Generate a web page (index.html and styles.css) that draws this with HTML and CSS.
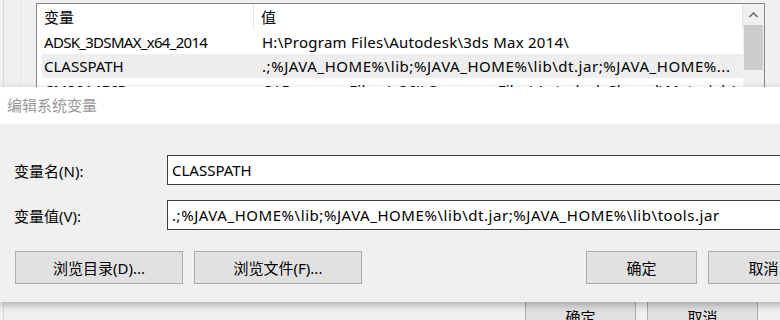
FILE: index.html
```html
<!DOCTYPE html>
<html lang="zh-CN">
<head>
<meta charset="utf-8">
<title>编辑系统变量</title>
<link rel="stylesheet" href="styles.css">
</head>
<body>
<div class="bgwin">
  <div class="tabpage">
    <div class="group">
      <div class="listview">
        <div class="lv-main">
          <div class="lv-header">
            <div class="col1 hcol">变量</div>
            <div class="col2 hcol">值</div>
          </div>
          <div class="lv-row">
            <div class="col1 sp-narrow">ADSK_3DSMAX_x64_2014</div>
            <div class="col2 sp-mid">H:\Program Files\Autodesk\3ds Max 2014\</div>
          </div>
          <div class="lv-row selected">
            <div class="col1">CLASSPATH</div>
            <div class="col2 sp-wide">.;%JAVA_HOME%\lib;%JAVA_HOME%\lib\dt.jar;%JAVA_HOME%...</div>
          </div>
          <div class="lv-row">
            <div class="col1">CM2014DIR</div>
            <div class="col2 sp-mid">C:\Program Files (x86)\Common Files\Autodesk Shared\Materials\</div>
          </div>
        </div>
        <div class="vscroll">
          <div class="sb-arrow">
            <svg width="9" height="6" viewBox="0 0 9 6"><path d="M0.5 5 L4.5 1 L8.5 5" fill="none" stroke="#606060" stroke-width="1.4"/></svg>
          </div>
          <div class="sb-thumb"></div>
        </div>
      </div>
    </div>
    <div class="bg-buttons">
      <button class="btn bg-btn">确定</button>
      <button class="btn bg-btn">取消</button>
    </div>
  </div>
</div>

<div class="dialog">
  <div class="titlebar">编辑系统变量</div>
  <div class="dlg-body">
    <div class="field">
      <label class="flabel">变量名(N):</label>
      <div class="input">CLASSPATH</div>
    </div>
    <div class="field">
      <label class="flabel">变量值(V):</label>
      <div class="input sp-wide">.;%JAVA_HOME%\lib;%JAVA_HOME%\lib\dt.jar;%JAVA_HOME%\lib\tools.jar</div>
    </div>
    <div class="buttons">
      <button class="btn wide">浏览目录(D)...</button>
      <button class="btn wide">浏览文件(F)...</button>
      <button class="btn ok">确定</button>
      <button class="btn">取消</button>
    </div>
  </div>
</div>
</body>
</html>
```

FILE: styles.css
```css
* { box-sizing: border-box; }

html, body {
  margin: 0;
  padding: 0;
  width: 780px;
  height: 320px;
  overflow: hidden;
}

body {
  background: #f0f0f0;
  font-family: "Noto Sans", "Noto Sans CJK SC", sans-serif;
  font-size: 15px;
  color: #000;
  position: relative;
}

.sp-narrow { letter-spacing: -0.7px; }
.sp-mid { letter-spacing: 0.25px; }
.sp-wide { letter-spacing: 0.55px; }

/* background window */
.bgwin {
  height: 320px;
  padding-left: 3px;
}

.tabpage {
  height: 320px;
  border-left: 1px solid #d9d9d9;
  display: flex;
  flex-direction: column;
}

.group {
  margin-left: 16px;
  border-left: 1px solid #e3e3e3;
  height: 296px;
  padding-top: 3px;
  padding-left: 15px;
}

.listview {
  width: 729px;
  height: 290px;
  border: 1px solid #828790;
  background: #fff;
  display: flex;
}

.lv-main {
  flex: 1;
  min-width: 0;
  overflow: hidden;
}

.lv-header {
  display: flex;
  height: 26px;
  align-items: center;
  border-right: 1px solid #e5e5e5;
}

.lv-header .col1 {
  width: 217px;
  padding-left: 7px;
  border-right: 1px solid #e5e5e5;
  height: 26px;
  line-height: 26px;
}

.lv-header .col2 {
  padding-left: 7px;
  line-height: 26px;
}

.lv-row {
  display: flex;
  height: 24px;
  line-height: 24px;
  margin-left: 5px;
  white-space: nowrap;
}

.lv-row.selected { background: #eeeeee; }

.lv-row .col1 {
  width: 213px;
  padding-left: 2px;
  flex: none;
}

.lv-row .col2 {
  padding-left: 7px;
  overflow: hidden;
}

.vscroll {
  width: 21px;
  flex: none;
  background: #f0f0f0;
  display: flex;
  flex-direction: column;
  align-items: center;
}

.sb-arrow {
  height: 21px;
  width: 21px;
  display: flex;
  align-items: center;
  justify-content: center;
}

.sb-thumb {
  width: 19px;
  height: 45px;
  background: #cdcdcd;
}

.bg-buttons {
  display: flex;
  gap: 11px;
  padding-left: 521px;
  margin-top: 7px;
}

.btn {
  font-family: "Noto Sans", "Noto Sans CJK SC", sans-serif;
  font-size: 15px;
  color: #000;
  background: #e1e1e1;
  border: 1px solid #adadad;
  width: 111px;
  height: 33px;
  padding: 0;
  flex: none;
}

/* dialog */
.dialog {
  position: absolute;
  top: 87px;
  left: 0;
  width: 834px;
  background: #f0f0f0;
  box-shadow: 0 3px 8px rgba(0, 0, 0, 0.28);
}

.titlebar {
  height: 37px;
  line-height: 37px;
  background: #fff;
  color: #999;
  padding-left: 7px;
}

.dlg-body {
  padding: 31px 15px 18px 15px;
  display: flex;
  flex-direction: column;
}

.field {
  display: flex;
  align-items: center;
  margin-bottom: 15px;
}

.flabel {
  width: 152px;
  flex: none;
  margin-left: -1px;
  margin-right: 1px;
}

.input {
  flex: 1;
  height: 30px;
  line-height: 28px;
  border: 1px solid #3c3c3c;
  background: #fff;
  padding-left: 4px;
  white-space: nowrap;
  overflow: hidden;
}

.buttons {
  display: flex;
  gap: 11px;
  margin-top: 6px;
}

.btn.wide { width: 168px; }

.btn.ok { margin-left: auto; }
```
